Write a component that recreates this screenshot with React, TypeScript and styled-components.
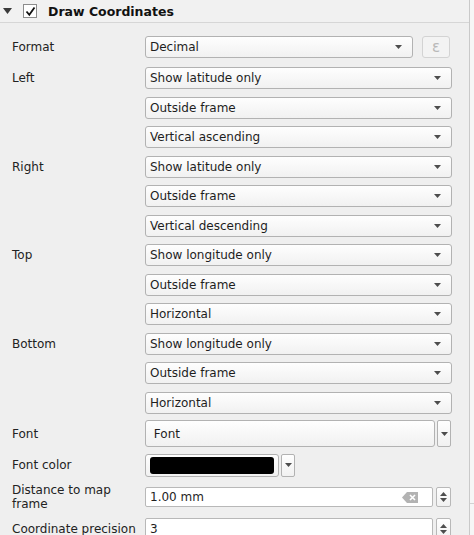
import React from "react";
import styled, { createGlobalStyle } from "styled-components";

const Global = createGlobalStyle`
  html, body { margin: 0; padding: 0; }
  body {
    width: 474px;
    height: 535px;
    overflow: hidden;
    background: #f4f4f4;
    font-family: "DejaVu Sans", Verdana, sans-serif;
    font-size: 12px;
    color: #1f1f1f;
  }
`;

const Page = styled.div`
  display: flex;
  width: 474px;
  height: 535px;
  overflow: hidden;
`;

const Panel = styled.div`
  width: 469px;
  flex: none;
  background: #efefef;
  border-right: 1px solid #c9c9c9;
  display: flex;
  flex-direction: column;
`;

const Strip = styled.div`
  flex: 1;
  background: #f6f6f6;
  display: flex;
  flex-direction: column;
`;

const StripTop = styled.div`
  height: 503px;
  border-bottom: 1px solid #d2d2d2;
`;

const Header = styled.div`
  height: 22px;
  flex: none;
  display: flex;
  align-items: center;
  background: #f1f1f1;
  border-bottom: 1px solid #d6d6d6;
  padding-left: 3px;
`;

const Caret = styled.svg`
  width: 9px;
  height: 6px;
  margin-right: 11px;
`;

const Check = styled.div`
  width: 14px;
  height: 14px;
  box-sizing: border-box;
  border: 1px solid #8c8c8c;
  background: #ffffff;
  display: flex;
  align-items: center;
  justify-content: center;
  margin-right: 11px;
`;

const Title = styled.span`
  font-weight: bold;
  font-size: 12.5px;
  color: #111;
`;

const Form = styled.div<{ $gap: number; $pt: number }>`
  display: grid;
  grid-template-columns: 133px 1fr;
  row-gap: ${(p) => p.$gap}px;
  padding: ${(p) => p.$pt}px 17px 0 12px;
  align-items: center;
`;

const Label = styled.div<{ $pb?: number }>`
  color: #222;
  line-height: 14px;
  padding-bottom: ${(p) => p.$pb ?? 0}px;
  white-space: nowrap;
`;

const Cell = styled.div<{ $pb?: number; $pr?: number }>`
  display: flex;
  align-items: center;
  gap: 2px;
  padding-bottom: ${(p) => p.$pb ?? 0}px;
  padding-right: ${(p) => p.$pr ?? 0}px;
`;

const ComboBox = styled.div<{ $h?: number }>`
  flex: 1;
  height: ${(p) => p.$h ?? 22}px;
  box-sizing: border-box;
  border: 1px solid #b2b2b2;
  border-radius: 3px;
  background: linear-gradient(#fefefe, #f1f1f1);
  display: flex;
  align-items: center;
  padding: 0 10px 0 4px;
  color: #1e1e1e;
`;

const ComboText = styled.span`
  flex: 1;
  white-space: nowrap;
`;

const Arrow = styled.svg`
  width: 7px;
  height: 4px;
  flex: none;
`;

const EpsButton = styled.div`
  width: 28px;
  height: 22px;
  box-sizing: border-box;
  margin-left: 7px;
  border: 1px solid #d3d3d3;
  border-radius: 3px;
  background: #f3f3f3;
  color: #b9b9b9;
  font-size: 15px;
  display: flex;
  align-items: center;
  justify-content: center;
`;

const SideButton = styled.div<{ $h: number }>`
  width: 14px;
  height: ${(p) => p.$h}px;
  box-sizing: border-box;
  border: 1px solid #b2b2b2;
  border-radius: 2px;
  background: linear-gradient(#fefefe, #f1f1f1);
  display: flex;
  align-items: center;
  justify-content: center;
  flex: none;
`;

const ColorButton = styled.div`
  width: 134px;
  height: 23px;
  box-sizing: border-box;
  border: 1px solid #b2b2b2;
  border-radius: 3px;
  background: linear-gradient(#fefefe, #f1f1f1);
  padding: 2px 4px;
  display: flex;
`;

const Swatch = styled.div`
  flex: 1;
  background: #000;
  border-radius: 3px;
`;

const Field = styled.div<{ $h: number }>`
  flex: 1;
  height: ${(p) => p.$h}px;
  box-sizing: border-box;
  border: 1px solid #b8b8b8;
  border-radius: 2px;
  background: #ffffff;
  display: flex;
  align-items: center;
  padding: 0 14px 0 4px;
`;

const Spin = styled.div<{ $h: number }>`
  width: 15px;
  height: ${(p) => p.$h}px;
  box-sizing: border-box;
  border: 1px solid #b8b8b8;
  border-radius: 2px;
  background: linear-gradient(#fefefe, #f1f1f1);
  display: flex;
  flex-direction: column;
  align-items: center;
  justify-content: center;
  gap: 2px;
  flex: none;
  margin-left: 1px;
`;

const Down = () => (
  <Arrow viewBox="0 0 7 4">
    <path d="M0 0 H7 L3.5 4 Z" fill="#4d4d4d" />
  </Arrow>
);

const Up = () => (
  <Arrow viewBox="0 0 7 4">
    <path d="M0 4 H7 L3.5 0 Z" fill="#4d4d4d" />
  </Arrow>
);

const ClearIcon = () => (
  <svg width="16" height="11" viewBox="0 0 16 11">
    <path d="M5 0 H16 V11 H5 L0 5.5 Z" fill="#b3b3b3" />
    <path d="M8 3 L13 8 M13 3 L8 8" stroke="#fff" strokeWidth="1.6" />
  </svg>
);

const Combo = ({ text }: { text: string }) => (
  <ComboBox>
    <ComboText>{text}</ComboText>
    <Down />
  </ComboBox>
);

const groups: { label: string; items: string[] }[] = [
  { label: "Left", items: ["Show latitude only", "Outside frame", "Vertical ascending"] },
  { label: "Right", items: ["Show latitude only", "Outside frame", "Vertical descending"] },
  { label: "Top", items: ["Show longitude only", "Outside frame", "Horizontal"] },
  { label: "Bottom", items: ["Show longitude only", "Outside frame", "Horizontal"] },
];

export default function App() {
  return (
    <>
      <Global />
      <Page>
        <Panel>
          <Header>
            <Caret viewBox="0 0 9 6">
              <path d="M0 0 H9 L4.5 6 Z" fill="#3a3a3a" />
            </Caret>
            <Check>
              <svg width="11" height="11" viewBox="0 0 11 11">
                <path d="M1.5 5.5 L4.3 8.8 L9.5 1.5" stroke="#111" strokeWidth="1.8" fill="none" />
              </svg>
            </Check>
            <Title>Draw Coordinates</Title>
          </Header>
          <Form $gap={7.5} $pt={13}>
            <Label $pb={1.5}>Format</Label>
            <Cell $pb={1.5} $pr={2}>
              <Combo text="Decimal" />
              <EpsButton>ε</EpsButton>
            </Cell>
            {groups.map((g) =>
              g.items.map((it, i) => (
                <React.Fragment key={g.label + i}>
                  <Label>{i === 0 ? g.label : ""}</Label>
                  <Cell>
                    <Combo text={it} />
                  </Cell>
                </React.Fragment>
              ))
            )}
          </Form>
          <Form $gap={6.5} $pt={6.5}>
            <Label>Font</Label>
            <Cell $pr={1}>
              <ComboBox $h={27}>
                <ComboText>&nbsp;Font</ComboText>
              </ComboBox>
              <SideButton $h={27}>
                <Down />
              </SideButton>
            </Cell>
            <Label>Font color</Label>
            <Cell>
              <ColorButton>
                <Swatch />
              </ColorButton>
              <SideButton $h={23}>
                <Down />
              </SideButton>
            </Cell>
            <Label>
              Distance to map
              <br />
              frame
            </Label>
            <Cell $pr={1}>
              <Field $h={20}>
                <ComboText>1.00 mm</ComboText>
                <ClearIcon />
              </Field>
              <Spin $h={20}>
                <Up />
                <Down />
              </Spin>
            </Cell>
            <Label>Coordinate precision</Label>
            <Cell $pr={1}>
              <Field $h={22}>
                <ComboText>3</ComboText>
              </Field>
              <Spin $h={22}>
                <Up />
                <Down />
              </Spin>
            </Cell>
          </Form>
        </Panel>
        <Strip>
          <StripTop />
        </Strip>
      </Page>
    </>
  );
}
